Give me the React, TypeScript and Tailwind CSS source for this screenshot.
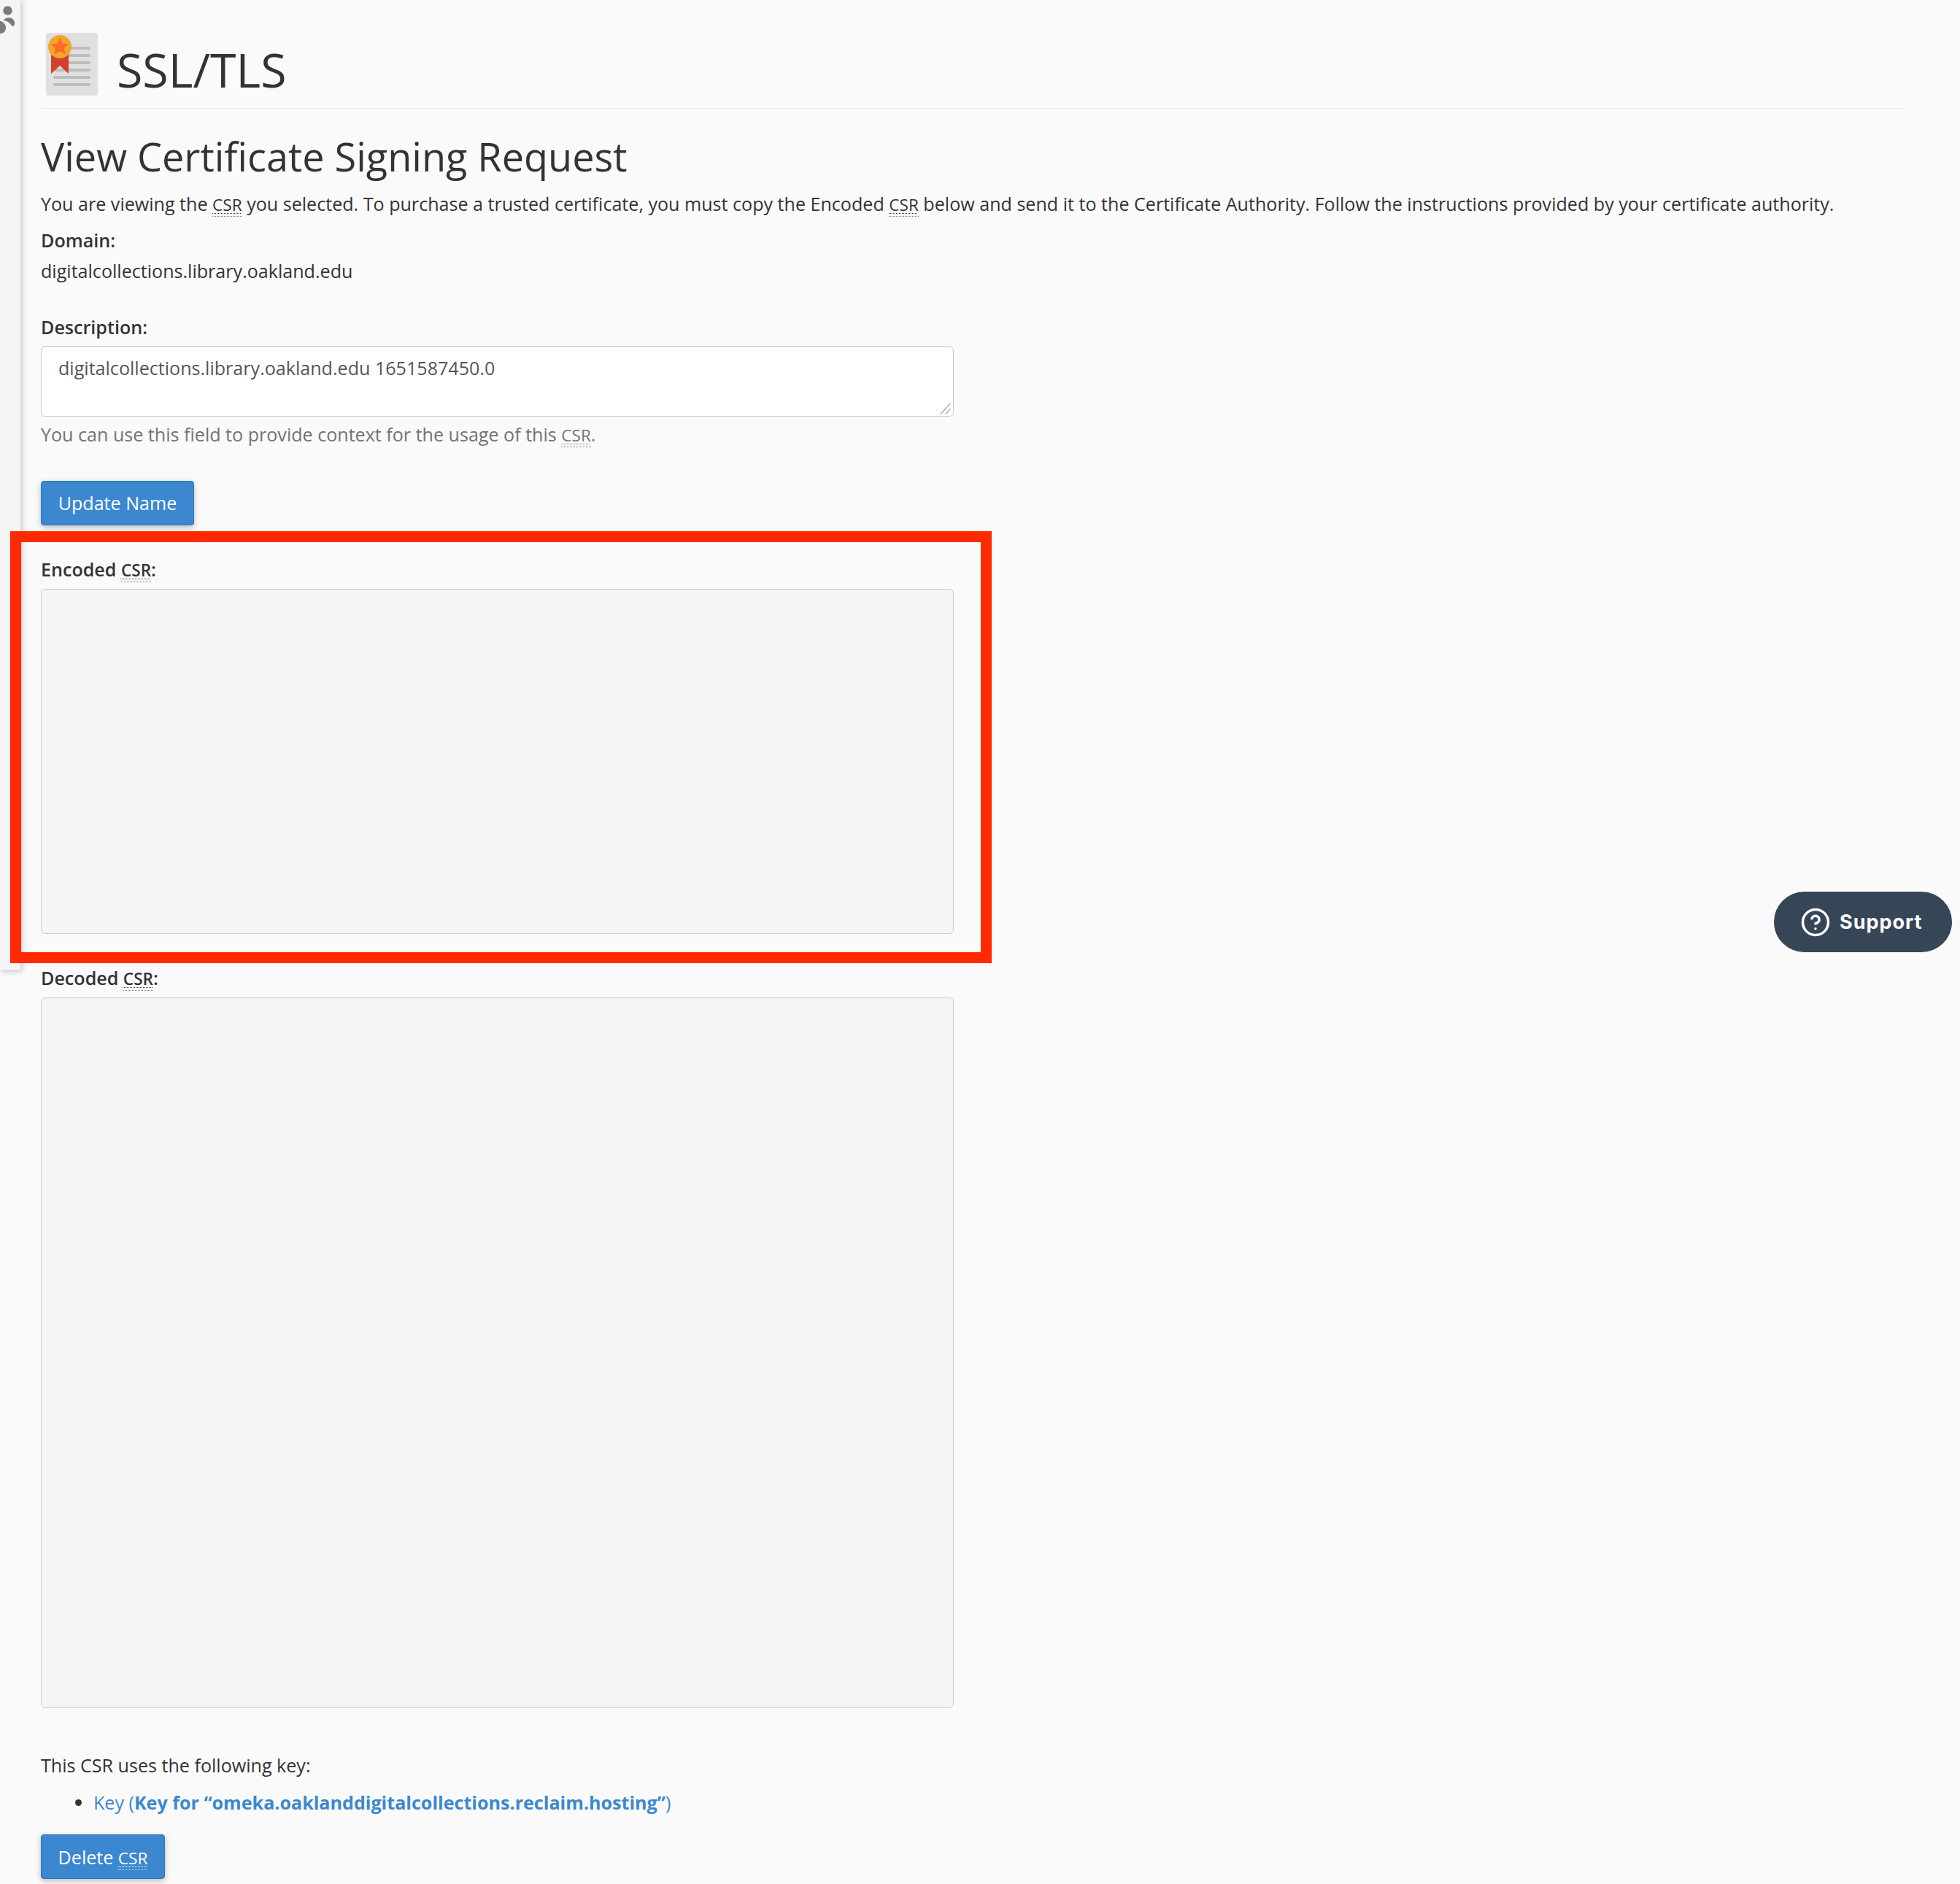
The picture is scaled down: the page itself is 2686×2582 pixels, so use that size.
import { CircleHelp } from "lucide-react";

function Abbr({ light }: { light?: boolean }) {
  return (
    <abbr
      className={
        "text-[90%] leading-none underline decoration-dotted decoration-1 underline-offset-[3px] border-b border-dotted " +
        (light ? "border-white/70" : "border-[#777]")
      }
      title="Certificate Signing Request"
    >
      CSR
    </abbr>
  );
}

function CertIcon() {
  return (
    <svg width="72" height="86" viewBox="0 0 72 86" className="shrink-0">
      <rect x="0" y="0" width="71" height="86" rx="3" fill="#e0e0e0" />
      {[21, 31, 41, 51, 61, 71].map((y) => (
        <rect key={y} x="10" y={y - 2} width="51" height="4" rx="2" fill="#bdbdbd" />
      ))}
      <path d="M7 30H31V56L19 45L7 56Z" fill="#d5402b" />
      <circle cx="19" cy="19" r="16" fill="#f2a52d" />
      <path
        d="M19 6.5l3.6 8 8.6.9-6.4 5.8 1.8 8.5-7.6-4.4-7.6 4.4 1.8-8.5-6.4-5.8 8.6-.9z"
        fill="#ff6b27"
      />
    </svg>
  );
}

export default function App() {
  return (
    <div
      className="relative h-[2582px] overflow-hidden bg-[#fafafa] pl-[56px] text-[25.1px] leading-[34px] text-[#333]"
      style={{ fontFamily: '"Open Sans", sans-serif' }}
    >
      <div className="absolute left-0 top-0 h-[1329px] w-[28px] bg-[#f5f5f5] shadow-[2px_2px_8px_rgba(0,0,0,0.22)]">
        <svg width="28" height="50" viewBox="0 0 28 50">
          <circle cx="10.5" cy="14.5" r="6.2" fill="#7b7b7b" />
          <path d="M6 26.5C9 23 19 23 20 31C20.5 36 17 37 15 34C13 30 9 29 5 28Z" fill="#7b7b7b" />
          <path d="M-4 29C2 27 8 32 8 38C8 44 3 46.5 -1 46Z" fill="#7b7b7b" />
        </svg>
      </div>

      <div className="w-[2553px]">
        <div className="flex items-start border-b border-[#eeeeee] pl-[7px] pt-[45px] pb-[17px]">
          <CertIcon />
          <h1 className="ml-[25px] mt-[14px] text-[64.5px] font-normal leading-[72px]">SSL/TLS</h1>
        </div>

        <h2 className="mt-[32px] text-[54px] font-normal leading-[66px]">View Certificate Signing Request</h2>

        <p className="mt-[15px] whitespace-nowrap">
          You are viewing the <Abbr /> you selected. To purchase a trusted certificate, you must copy the Encoded{" "}
          <Abbr /> below and send it to the Certificate Authority. Follow the instructions provided by your certificate
          authority.
        </p>

        <div className="mt-[16px] font-semibold">Domain:</div>
        <div className="mt-[8px]">digitalcollections.library.oakland.edu</div>

        <label className="mt-[43px] block font-semibold">Description:</label>
        <div className="relative mt-[9px] w-[1251px]">
          <textarea
            readOnly
            defaultValue="digitalcollections.library.oakland.edu 1651587450.0"
            className="block h-[97px] w-full resize-none rounded-[6px] border border-[#cccccc] bg-white px-[23px] py-[12px] text-[#555] shadow-[inset_0_1px_1px_rgba(0,0,0,0.075)] outline-none"
          />
          <svg width="16" height="16" viewBox="0 0 16 16" className="absolute bottom-[3px] right-[3px]">
            <path d="M1 15.5L14.5 1M8 15.5L14.5 8.5" stroke="#666" strokeWidth="1" fill="none" />
          </svg>
        </div>
        <div className="mt-[7px] text-[#737373]">
          You can use this field to provide context for the usage of this <Abbr />.
        </div>

        <button className="mt-[47px] block h-[61px] w-[210px] rounded-[4px] border border-[#2e74b5] bg-[#3b88d1] pb-[2px] text-white shadow-[0_3px_8px_rgba(0,0,0,0.25)]">
          Update Name
        </button>

        <div className="mt-[43px] font-semibold">
          Encoded <Abbr />:
        </div>
        <div className="mt-[10px] h-[473px] w-[1251px] rounded-[6px] border border-[#cccccc] bg-[#f5f5f5]" />

        <div className="mt-[43px] font-semibold">
          Decoded <Abbr />:
        </div>
        <div className="mt-[10px] h-[974px] w-[1251px] rounded-[6px] border border-[#cccccc] bg-[#f5f5f5]" />

        <p className="mt-[61px]">This CSR uses the following key:</p>
        <ul className="mt-[17px] list-disc pl-[72px]">
          <li>
            <a className="text-[#3b88d1]">
              Key (<b className="font-bold">Key for “omeka.oaklanddigitalcollections.reclaim.hosting”</b>)
            </a>
          </li>
        </ul>

        <button className="mt-[27px] block h-[61px] w-[170px] rounded-[4px] border border-[#2e74b5] bg-[#3b88d1] text-white shadow-[0_3px_8px_rgba(0,0,0,0.25)]">
          Delete <Abbr light />
        </button>
      </div>

      <div className="absolute left-[14px] top-[728px] h-[592px] w-[1345px] border-[15px] border-[#ff2a00]" />

      <div
        className="absolute left-[2431px] top-[1222px] flex h-[83px] w-[244px] items-center rounded-full bg-[#364656] pl-[38px] text-[27px] font-bold tracking-[1px] text-white"
        style={{ fontFamily: "Inter, sans-serif" }}
      >
        <CircleHelp size={42} strokeWidth={2} className="-ml-[2px]" />
        <span className="ml-[12px]">Support</span>
      </div>
    </div>
  );
}
